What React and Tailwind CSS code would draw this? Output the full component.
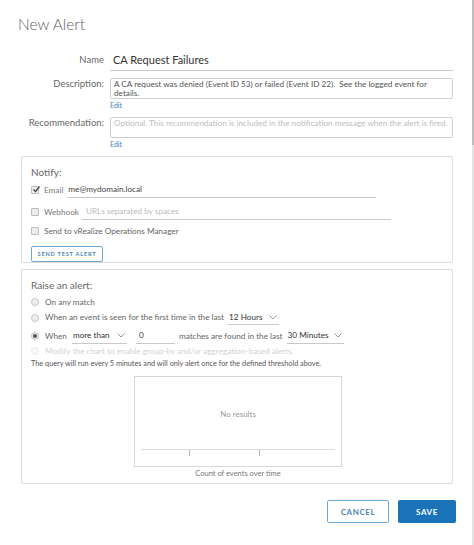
import React from "react";

const Chevron = () => (
  <svg width="8" height="5" viewBox="0 0 8 5" className="ml-auto">
    <path d="M0.5 0.5 L4 4 L7.5 0.5" fill="none" stroke="#8a8a8a" strokeWidth="0.9" />
  </svg>
);

const Radio = ({ on, disabled }) => (
  <span
    className={`inline-flex items-center justify-center w-[8px] h-[8px] rounded-full border ${
      disabled ? "border-[#ececec] bg-[#f7f7f7]" : "border-[#c4c4c4] bg-[#efefef]"
    }`}
  >
    {on && <span className="w-[4px] h-[4px] rounded-full bg-[#555]" />}
  </span>
);

const Check = ({ on }) => (
  <span className="relative inline-block w-[8px] h-[8px] border border-[#bdbdbd] bg-[#ececec] rounded-[1px]">
    {on && (
      <svg width="9" height="9" viewBox="0 0 9 9" className="absolute -top-[2px] left-0">
        <path d="M1.5 4.5 L3.5 6.5 L7.5 1.5" fill="none" stroke="#444" strokeWidth="1.3" />
      </svg>
    )}
  </span>
);

export default function App() {
  return (
    <div
      className="relative w-[474px] h-[545px] bg-white overflow-hidden text-[#565656]"
      style={{ fontFamily: "Lato, 'Open Sans', sans-serif" }}
    >
      {/* scrollbar */}
      <div className="absolute right-0 top-0 w-[2px] h-full bg-[#e3e3e3]">
        <div className="w-full h-[145px] bg-[#bdbdbd]" />
      </div>

      <div className="pl-[18px] pr-[21px] pt-[13px]">
        <div className="text-[15.5px] font-light leading-[22px] text-[#5e5e5e]">New Alert</div>

        {/* Name */}
        <div className="flex items-end mt-[17px]">
          <div className="w-[86px] text-right text-[9.5px] text-[#666] pb-[4px]">Name</div>
          <div className="ml-[6px] flex-1 border-b border-[#c9c9c9] h-[19px] pl-[3px] text-[11px] text-[#333] leading-[16px]">
            CA Request Failures
          </div>
        </div>

        {/* Description */}
        <div className="flex mt-[7px]">
          <div className="w-[86px] text-right text-[9.5px] text-[#666] pt-[0px] leading-[12px]">Description:</div>
          <div className="ml-[6px] flex-1">
            <div className="border border-[#cfcfcf] rounded-[2px] h-[21px] px-[3px] pt-[1px] text-[8.2px] leading-[9px] text-[#555]">
              A CA request was denied (Event ID 53) or failed (Event ID 22).&nbsp; See the logged event for details.
            </div>
            <div className="text-[7px] text-[#3a7fb8] mt-[2px] leading-[9px]">Edit</div>
          </div>
        </div>

        {/* Recommendation */}
        <div className="flex mt-[7px]">
          <div className="w-[86px] text-right text-[9.5px] text-[#666] leading-[12px]">Recommendation:</div>
          <div className="ml-[6px] flex-1">
            <div className="border border-[#cfcfcf] rounded-[2px] h-[21px] px-[3px] pt-[1px] text-[8.2px] leading-[9px] text-[#bdbdbd] whitespace-nowrap overflow-hidden">
              Optional. This recommendation is included in the notification message when the alert is fired.
            </div>
            <div className="text-[7px] text-[#3a7fb8] mt-[2px] leading-[9px]">Edit</div>
          </div>
        </div>
      </div>

      <div className="pl-[21px] pr-[21px]">
        {/* Notify panel */}
        <div className="mt-[7px] border border-[#dcdcdc] rounded-[2px] h-[107px] pl-[9px] pt-[9px]">
          <div className="text-[10px] leading-[12px] text-[#666]">Notify:</div>
          <div className="flex items-center mt-[4px] h-[16px]">
            <Check on />
            <span className="ml-[5px] text-[8.2px] text-[#777]">Email</span>
            <div className="ml-[4px] w-[309px] border-b border-[#c9c9c9] h-[15px] pl-[1px] text-[8.2px] text-[#444] leading-[13px]">
              me@mydomain.local
            </div>
          </div>
          <div className="flex items-center mt-[6px] h-[16px]">
            <Check />
            <span className="ml-[5px] text-[8.2px] text-[#777]">Webhook</span>
            <div className="ml-[3px] w-[309px] border-b border-[#c9c9c9] h-[15px] pl-[4px] text-[8.2px] text-[#bbb] leading-[13px]">
              URLs separated by spaces
            </div>
          </div>
          <div className="flex items-center mt-[4px] h-[14px]">
            <Check />
            <span className="ml-[5px] text-[8.2px] text-[#666]">Send to vRealize Operations Manager</span>
          </div>
          <div className="mt-[1px] inline-flex items-center justify-center w-[72px] h-[16px] border border-[#6fa8d0] rounded-[2px] text-[5.6px] font-bold tracking-[0.8px] text-[#4a86b8]">
            SEND TEST ALERT
          </div>
        </div>

        {/* Raise panel */}
        <div className="mt-[6px] border border-[#dcdcdc] rounded-[2px] h-[215px] pl-[9px] pt-[9px]">
          <div className="text-[10px] leading-[12px] text-[#666]">Raise an alert:</div>
          <div className="flex items-center mt-[4px] h-[14px]">
            <Radio />
            <span className="ml-[6px] text-[8.2px] text-[#666]">On any match</span>
          </div>
          <div className="flex items-center mt-[1px] h-[15px]">
            <Radio />
            <span className="ml-[6px] text-[8.2px] text-[#666]">When an event is seen for the first time in the last</span>
            <div className="ml-[4px] w-[51px] h-[15px] border-b border-[#c9c9c9] flex items-center pl-[1px] pr-[2px] text-[8.2px] text-[#333]">
              12 Hours
              <Chevron />
            </div>
          </div>
          <div className="flex items-center mt-[3px] h-[16px]">
            <Radio on />
            <span className="ml-[6px] text-[8.2px] text-[#666]">When</span>
            <div className="ml-[5px] w-[55px] h-[16px] border-b border-[#c9c9c9] flex items-center pl-[1px] pr-[2px] text-[8.2px] text-[#333]">
              more than
              <Chevron />
            </div>
            <div className="ml-[9px] w-[39px] h-[16px] border-b border-[#c9c9c9] flex items-center pl-[3px] text-[8.2px] text-[#333]">
              0
            </div>
            <span className="ml-[4px] text-[8.2px] text-[#666]">matches are found in the last</span>
            <div className="ml-[4px] w-[57px] h-[16px] border-b border-[#c9c9c9] flex items-center pl-[1px] pr-[2px] text-[8.2px] text-[#333]">
              30 Minutes
              <Chevron />
            </div>
          </div>
          <div className="flex items-center mt-[0px] h-[14px]">
            <Radio disabled />
            <span className="ml-[6px] text-[8.2px] text-[#d2d2d2]">
              Modify the chart to enable group-by and/or aggregation-based alerts.
            </span>
          </div>
          <div className="text-[7.3px] leading-[12px] text-[#555] mt-[0px]">
            The query will run every 5 minutes and will only alert once for the defined threshold above.
          </div>

          {/* chart */}
          <div className="ml-[103px] mt-[6px] w-[208px] h-[91px] border border-[#d6d6d6] flex flex-col">
            <div className="text-center text-[8px] text-[#9a9a9a] mt-[31px]">No results</div>
            <div className="mt-auto mb-[10px] mx-[6px] h-[7px] border-t border-[#dadada] flex">
              <div className="ml-[48px] w-px h-[6px] bg-[#bcbcbc]" />
              <div className="ml-[69px] w-px h-[6px] bg-[#bcbcbc]" />
            </div>
          </div>
          <div className="ml-[103px] w-[208px] text-center text-[7.5px] text-[#777] mt-[1px]">
            Count of events over time
          </div>
        </div>

        {/* buttons */}
        <div className="flex justify-end mt-[16px] mr-[-3px] gap-[9px]">
          <div className="w-[62px] h-[23px] border border-[#6fa8d0] rounded-[2px] flex items-center justify-center text-[8px] font-bold tracking-[0.6px] text-[#4a86b8]">
            CANCEL
          </div>
          <div className="w-[58px] h-[23px] bg-[#1a73b9] rounded-[2px] flex items-center justify-center text-[8px] font-bold tracking-[0.6px] text-white">
            SAVE
          </div>
        </div>
      </div>
    </div>
  );
}
